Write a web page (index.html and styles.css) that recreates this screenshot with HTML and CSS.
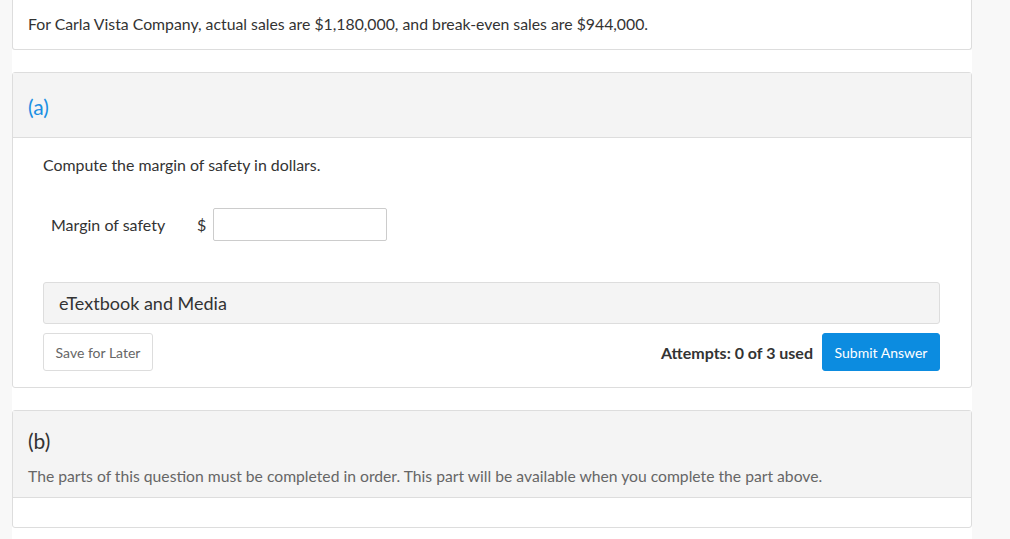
FILE: index.html
```html
<!DOCTYPE html>
<html lang="en">
<head>
<meta charset="UTF-8">
<meta name="viewport" content="width=device-width, initial-scale=1.0">
<title>Question</title>
<link rel="stylesheet" href="styles.css">
</head>
<body>

<div class="page">

  <div class="card intro">
    For Carla Vista Company, actual sales are $1,180,000, and break-even sales are $944,000.
  </div>

  <div class="card part">
    <div class="part-head">
      <div class="part-label active">(a)</div>
    </div>
    <div class="part-body">
      <div class="prompt">Compute the margin of safety in dollars.</div>

      <div class="answer-row">
        <span class="answer-label">Margin of safety</span>
        <span class="unit">$</span>
        <input type="text" class="answer-input">
      </div>

      <div class="media-box">eTextbook and Media</div>

      <div class="actions">
        <button class="btn btn-save">Save for Later</button>
        <div class="actions-right">
          <span class="attempts">Attempts: 0 of 3 used</span>
          <button class="btn btn-submit">Submit Answer</button>
        </div>
      </div>
    </div>
  </div>

  <div class="card part">
    <div class="part-head locked">
      <div class="part-label">(b)</div>
      <div class="locked-note">The parts of this question must be completed in order. This part will be available when you complete the part above.</div>
    </div>
    <div class="part-empty"></div>
  </div>

</div>

</body>
</html>
```

FILE: styles.css
```css
body {
  margin: 0;
  background-color: #f8f8f8;
  font-family: "Lato", "Open Sans", sans-serif;
  color: #333333;
}

.page {
  width: 960px;
  margin-left: 12px;
  background-color: #ffffff;
  min-height: 100vh;
  overflow: hidden;
}

.card {
  border: 1px solid #dddddd;
  border-radius: 3px;
  background-color: #ffffff;
}

.intro {
  border-top: none;
  border-radius: 0 0 3px 3px;
  padding: 14px 15px 15px;
  font-size: 15.8px;
  line-height: 20px;
  margin-bottom: 22px;
}

.part {
  margin-bottom: 22px;
}

.part-head {
  background-color: #f4f4f4;
  border-bottom: 1px solid #dddddd;
  padding: 22px 15px 18px;
}

.part-head.locked {
  padding: 18px 15px 11px;
}

.part-label {
  font-size: 21px;
  line-height: 24px;
}

.part-label.active {
  color: #1a8fe3;
}

.locked-note {
  margin-top: 13px;
  font-size: 15.7px;
  line-height: 20px;
  color: #666666;
}

.part-body {
  padding: 17px 31px 16px 30px;
}

.prompt {
  font-size: 15.9px;
  line-height: 20px;
}

.answer-row {
  display: flex;
  align-items: center;
  margin-top: 33px;
  padding-left: 8px;
  font-size: 16px;
}

.answer-label {
  width: 146px;
}

.unit {
  width: 16px;
}

.answer-input {
  width: 174px;
  height: 33px;
  box-sizing: border-box;
  border: 1px solid #cccccc;
  border-radius: 2px;
  margin: 0;
}

.media-box {
  margin-top: 41px;
  background-color: #f4f4f4;
  border: 1px solid #dddddd;
  border-radius: 3px;
  height: 40px;
  display: flex;
  align-items: center;
  padding-left: 15px;
  font-size: 18px;
}

.actions {
  display: flex;
  justify-content: space-between;
  align-items: center;
  margin-top: 9px;
}

.actions-right {
  display: flex;
  align-items: center;
  gap: 9px;
}

.attempts {
  font-size: 16px;
  font-weight: 700;
  color: #333333;
}

.btn {
  height: 38px;
  font-family: "Lato", "Open Sans", sans-serif;
  font-size: 14px;
  border-radius: 3px;
  cursor: pointer;
  margin: 0;
  padding: 0;
}

.btn-save {
  width: 110px;
  background-color: #ffffff;
  border: 1px solid #dddddd;
  color: #666666;
}

.btn-submit {
  width: 118px;
  background-color: #0c8ce0;
  border: 1px solid #0c8ce0;
  color: #ffffff;
}

.part-empty {
  height: 29px;
}
```
